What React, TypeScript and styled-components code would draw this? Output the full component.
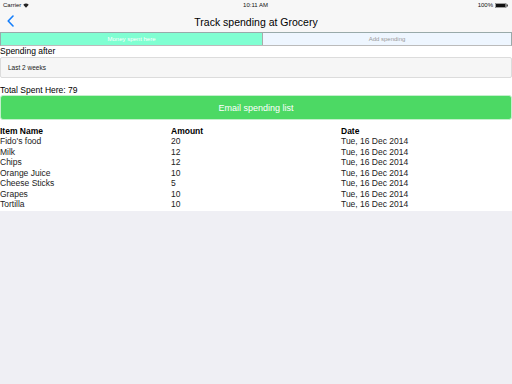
import React from "react";
import styled, { createGlobalStyle } from "styled-components";

const Global = createGlobalStyle`
  html, body { margin: 0; padding: 0; background: #efeff4; }
  body { font-family: "Liberation Sans", Arial, sans-serif; color: #000; }
  * { box-sizing: border-box; }
`;

const Page = styled.div`
  width: 512px;
  height: 384px;
  background: #efeff4;
  display: flex;
  flex-direction: column;
`;

const Top = styled.div`
  background: #f7f7f7;
`;

const StatusBar = styled.div`
  height: 10px;
  display: grid;
  grid-template-columns: 1fr auto 1fr;
  align-items: center;
  padding: 0 4px 0 3px;
  font-size: 6px;
  color: #111;
`;

const StatusLeft = styled.div`
  display: flex;
  align-items: center;
  gap: 2px;
`;

const StatusRight = styled.div`
  display: flex;
  align-items: center;
  justify-content: flex-end;
  gap: 2px;
`;

const NavBar = styled.div`
  height: 22px;
  display: grid;
  grid-template-columns: 40px 1fr 40px;
  align-items: center;
`;

const Title = styled.div`
  text-align: center;
  font-size: 10.5px;
  font-weight: 500;
  padding-top: 1px;
`;

const Back = styled.div`
  padding-left: 7px;
  display: flex;
  align-items: center;
`;

const Content = styled.div`
  background: #fff;
  display: flex;
  flex-direction: column;
`;

const Segmented = styled.div`
  height: 14px;
  display: grid;
  grid-template-columns: 261px 1fr;
  border: 1px solid #9aa;
  border-bottom-color: #bbb;
`;

const Segment = styled.div<{ $active?: boolean }>`
  background: ${(p) => (p.$active ? "#80ffd2" : "#eef6ff")};
  color: ${(p) => (p.$active ? "#fff" : "#999")};
  border-left: ${(p) => (p.$active ? "none" : "1px solid #aaa")};
  font-size: 6px;
  display: flex;
  align-items: center;
  justify-content: center;
`;

const Label = styled.div<{ $top?: number }>`
  font-size: 8.5px;
  line-height: 9px;
  margin-top: ${(p) => p.$top ?? 0}px;
`;

const Field = styled.div`
  height: 21px;
  margin-top: 1px;
  background: #f6f6f6;
  border: 1px solid #dcdcdc;
  border-radius: 2px;
  font-size: 6.5px;
  display: flex;
  align-items: center;
  padding-left: 7px;
  color: #222;
`;

const Button = styled.div`
  height: 25px;
  margin-top: 0;
  background: #4cd964;
  border: 1px solid #c4f0cc;
  border-radius: 3px;
  color: #fff;
  font-size: 9px;
  display: flex;
  align-items: center;
  justify-content: center;
`;

const Table = styled.div`
  margin-top: 6px;
  padding-bottom: 1px;
  display: flex;
  flex-direction: column;
`;

const Row = styled.div<{ $head?: boolean }>`
  display: grid;
  grid-template-columns: 171px 170px 1fr;
  font-size: 8.5px;
  line-height: 10.45px;
  font-weight: ${(p) => (p.$head ? 700 : 400)};
  color: ${(p) => (p.$head ? "#000" : "#222")};
`;

const Cell = styled.div`
  white-space: nowrap;
`;

const rows: [string, string, string][] = [
  ["Fido's food", "20", "Tue, 16 Dec 2014"],
  ["Milk", "12", "Tue, 16 Dec 2014"],
  ["Chips", "12", "Tue, 16 Dec 2014"],
  ["Orange Juice", "10", "Tue, 16 Dec 2014"],
  ["Cheese Sticks", "5", "Tue, 16 Dec 2014"],
  ["Grapes", "10", "Tue, 16 Dec 2014"],
  ["Tortilla", "10", "Tue, 16 Dec 2014"],
];

const Wifi = () => (
  <svg width="6" height="5" viewBox="0 0 12 10">
    <path d="M6 9.5 L0.5 3.5 A8 8 0 0 1 11.5 3.5 Z" fill="#222" />
  </svg>
);

const Battery = () => (
  <svg width="13" height="5" viewBox="0 0 26 10">
    <rect x="0.5" y="0.5" width="22" height="9" rx="1.5" fill="none" stroke="#111" />
    <rect x="2" y="2" width="19" height="6" fill="#111" />
    <rect x="23.5" y="3" width="2" height="4" fill="#111" />
  </svg>
);

const Chevron = () => (
  <svg width="7" height="12" viewBox="0 0 7 12">
    <path d="M6 1 L1.2 6 L6 11" fill="none" stroke="#147efb" strokeWidth="1.6" strokeLinecap="round" strokeLinejoin="round" />
  </svg>
);

export default function App() {
  return (
    <Page>
      <Global />
      <Top>
        <StatusBar>
          <StatusLeft>
            <span>Carrier</span>
            <Wifi />
          </StatusLeft>
          <span>10:11 AM</span>
          <StatusRight>
            <span>100%</span>
            <Battery />
          </StatusRight>
        </StatusBar>
        <NavBar>
          <Back>
            <Chevron />
          </Back>
          <Title>Track spending at Grocery</Title>
          <div />
        </NavBar>
      </Top>
      <Content>
        <Segmented>
          <Segment $active>Money spent here</Segment>
          <Segment>Add spending</Segment>
        </Segmented>
        <Label $top={1}>Spending after</Label>
        <Field>Last 2 weeks</Field>
        <Label $top={8}>Total Spent Here: 79</Label>
        <Button>Email spending list</Button>
        <Table>
          <Row $head>
            <Cell>Item Name</Cell>
            <Cell>Amount</Cell>
            <Cell>Date</Cell>
          </Row>
          {rows.map((r) => (
            <Row key={r[0]}>
              <Cell>{r[0]}</Cell>
              <Cell>{r[1]}</Cell>
              <Cell>{r[2]}</Cell>
            </Row>
          ))}
        </Table>
      </Content>
    </Page>
  );
}
